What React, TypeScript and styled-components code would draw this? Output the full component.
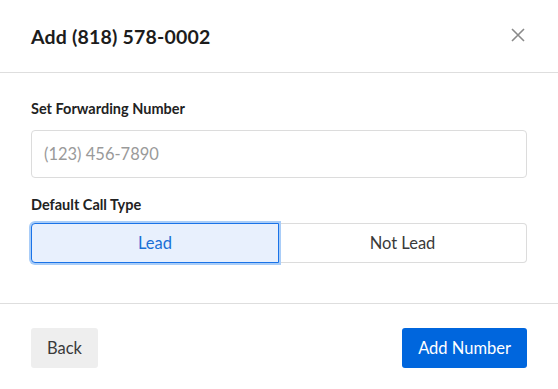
import React, { useState } from "react";
import styled, { createGlobalStyle } from "styled-components";

const GlobalStyle = createGlobalStyle`
  html, body {
    margin: 0;
    padding: 0;
    background: #ffffff;
    font-family: "Lato", "Noto Sans", sans-serif;
    color: #1f1f1f;
  }
  * { box-sizing: border-box; }
`;

const Modal = styled.div`
  width: 558px;
  height: 389px;
  background: #fff;
  display: flex;
  flex-direction: column;
`;

const Header = styled.div`
  height: 73px;
  display: flex;
  align-items: center;
  justify-content: space-between;
  padding: 0 33px 0 31px;
  border-bottom: 1px solid #dedede;
`;

const Title = styled.h2`
  margin: 0;
  font-size: 19.5px;
  font-weight: 700;
  color: #1c1c1c;
  letter-spacing: 0.2px;
`;

const CloseBtn = styled.button`
  border: none;
  background: none;
  padding: 0;
  width: 14px;
  height: 14px;
  display: flex;
  align-items: center;
  justify-content: center;
  margin-top: -2px;
  cursor: pointer;
`;

const Body = styled.div`
  padding: 27px 31px 0 31px;
  height: 231px;
  border-bottom: 1px solid #dedede;
`;

const Label = styled.div<{ $gap: number }>`
  font-size: 14.5px;
  font-weight: 700;
  color: #222;
  margin-bottom: ${(p) => p.$gap}px;
`;

const Input = styled.input`
  width: 100%;
  height: 48px;
  border: 1px solid #dcdcdc;
  border-radius: 4px;
  padding: 0 12px;
  font-family: inherit;
  font-size: 16.5px;
  color: #333;
  margin-bottom: 18px;
  outline: none;
  &::placeholder { color: #9a9a9a; }
`;

const Toggle = styled.div`
  display: grid;
  grid-template-columns: 1fr 1fr;
  height: 40px;
`;

const ToggleBtn = styled.button<{ $active: boolean; $side: "l" | "r" }>`
  font-family: inherit;
  font-size: 16.5px;
  border-radius: ${(p) => (p.$side === "l" ? "4px 0 0 4px" : "0 4px 4px 0")};
  border: 1px solid ${(p) => (p.$active ? "#1a73e8" : "#dcdcdc")};
  ${(p) => (p.$side === "r" ? "border-left: none;" : "")}
  background: ${(p) => (p.$active ? "#e8f0fd" : "#fff")};
  color: ${(p) => (p.$active ? "#1a6fd6" : "#3a3a3a")};
  box-shadow: ${(p) => (p.$active ? "0 0 0 2px #a9cdf8" : "none")};
  position: relative;
  z-index: ${(p) => (p.$active ? 1 : 0)};
  cursor: pointer;
`;

const Footer = styled.div`
  flex: 1;
  display: flex;
  align-items: center;
  justify-content: space-between;
  padding: 3px 31px 0 31px;
`;

const Button = styled.button<{ $primary?: boolean }>`
  height: 40px;
  border: none;
  border-radius: 3px;
  font-family: inherit;
  font-size: 16.5px;
  padding: 0 16px;
  background: ${(p) => (p.$primary ? "#0066dd" : "#eeeeee")};
  color: ${(p) => (p.$primary ? "#fff" : "#3a3a3a")};
  cursor: pointer;
`;

export default function App() {
  const [type, setType] = useState("lead");
  return (
    <>
      <GlobalStyle />
      <Modal>
        <Header>
          <Title>Add (818) 578-0002</Title>
          <CloseBtn aria-label="close">
            <svg width="14" height="14" viewBox="0 0 14 14">
              <path d="M1 1 L13 13 M13 1 L1 13" stroke="#8a8a8a" strokeWidth="1.6" />
            </svg>
          </CloseBtn>
        </Header>
        <Body>
          <Label $gap={13}>Set Forwarding Number</Label>
          <Input placeholder="(123) 456-7890" />
          <Label $gap={10}>Default Call Type</Label>
          <Toggle>
            <ToggleBtn $side="l" $active={type === "lead"} onClick={() => setType("lead")}>
              Lead
            </ToggleBtn>
            <ToggleBtn $side="r" $active={type === "not"} onClick={() => setType("not")}>
              Not Lead
            </ToggleBtn>
          </Toggle>
        </Body>
        <Footer>
          <Button>Back</Button>
          <Button $primary>Add Number</Button>
        </Footer>
      </Modal>
    </>
  );
}
